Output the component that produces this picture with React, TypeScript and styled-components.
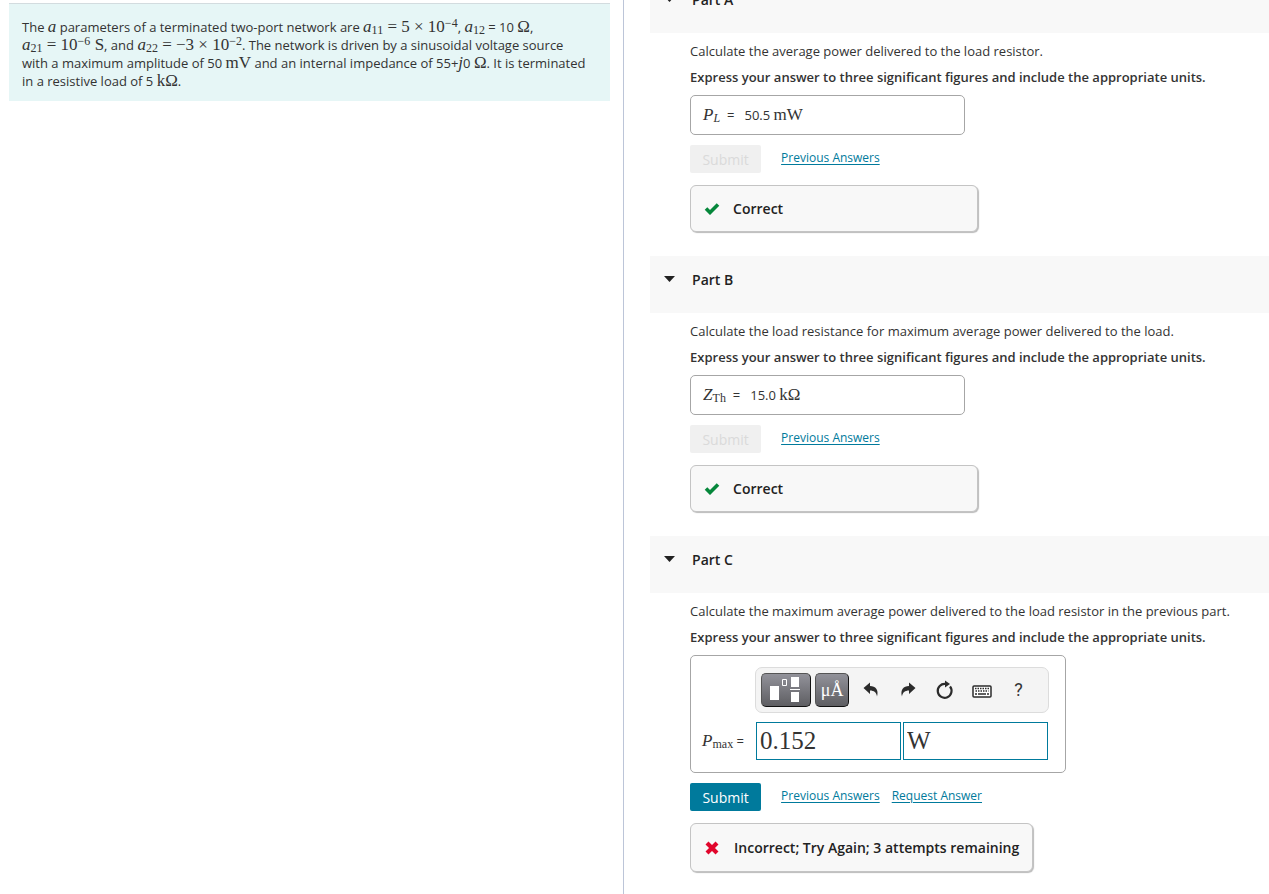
import React, { useState } from "react";
import styled, { createGlobalStyle, css } from "styled-components";

const sans = '"Open Sans", "Noto Sans CJK KR", sans-serif';
const serif = '"Liberation Serif", "Times New Roman", serif';
const teal = "#007a9c";

const GlobalStyle = createGlobalStyle`
  * { box-sizing: border-box; }
  body {
    margin: 0;
    background: #fff;
    color: #333;
    font: 13px/18px ${sans};
  }
  h2, p { margin: 0; }
  button, input { font-family: inherit; color: inherit; }
`;

const Page = styled.div`
  display: grid;
  grid-template-columns: minmax(0, 491fr) minmax(0, 509fr);
  height: 100vh;
`;

const ProblemPane = styled.section`
  padding: 3px 13px 0 9px;
`;

const ProblemText = styled.p`
  padding: 14px 13px 11px;
  border-top: 1px solid #d3dcdf;
  background: #e6f6f6;
`;

const PartsPane = styled.main`
  overflow: hidden;
  border-left: 1px solid #bcc5d8;
  padding-left: 26px;
`;

const PartList = styled.div`
  margin-top: -24px;
`;

const PartHeader = styled.button`
  display: flex;
  align-items: flex-start;
  gap: 17px;
  width: 100%;
  height: 57px;
  padding: 14px 14px;
  border: 0;
  background: #f8f8f8;
  color: #222;
  font-size: 14px;
  line-height: 20px;
  font-weight: 600;
  text-align: left;

  svg { margin-top: 6px; }
`;

const PartBody = styled.div`
  display: flex;
  flex-direction: column;
  align-items: flex-start;
  padding: 9px 16px 24px 40px;
`;

const Instruction = styled.p`
  margin: 8px 0 9px;
  font-weight: 600;
`;

const AnswerBox = styled.div`
  display: flex;
  align-items: center;
  width: 275px;
  max-width: 100%;
  height: 40px;
  padding: 0 12px;
  border: 1px solid #a6a6a6;
  border-radius: 5px;
  white-space: pre;
`;

const EntryBox = styled.div`
  display: grid;
  grid-template-columns: 53px 294px;
  row-gap: 9px;
  align-items: center;
  align-content: start;
  height: 118px;
  padding: 11px 16px 11px 11px;
  border: 1px solid #a6a6a6;
  border-radius: 5px;
`;

const Toolbar = styled.div`
  grid-column: 2;
  display: flex;
  align-items: center;
  gap: 4px;
  height: 46px;
  padding: 0 5px;
  border: 1px solid #dcdcdc;
  border-radius: 7px;
  background: #f4f4f4;
`;

const PaletteButton = styled.button<{ $wide?: boolean }>`
  display: flex;
  align-items: center;
  justify-content: center;
  width: ${(p) => (p.$wide ? 50 : 34)}px;
  height: 34px;
  padding: 0;
  border: 1px solid #111;
  border-top-color: #555;
  border-left-color: #555;
  border-radius: 5px;
  background: linear-gradient(#92929a, #5e5e62);
  color: #fff;
  font: 18px/20px ${serif};
`;

const IconGroup = styled.div`
  display: flex;
  gap: 4px;
  margin-left: 1px;
`;

const IconButton = styled.button`
  display: flex;
  align-items: center;
  justify-content: center;
  width: 33px;
  height: 34px;
  padding: 0;
  border: 0;
  background: none;
  font: 18px/20px Roboto, sans-serif;
`;

const FieldLabel = styled.label`
  white-space: pre;
`;

const Fields = styled.div`
  display: grid;
  grid-template-columns: 1fr 1fr;
  gap: 2px;
  padding: 0 1px;
`;

const Field = styled.input`
  width: 100%;
  height: 38px;
  padding: 0 3px;
  border: 1px solid ${teal};
  border-radius: 0;
  outline: 0;
  background: #fff;
  font: 25px/36px ${serif};
`;

const Actions = styled.div`
  display: flex;
  align-items: flex-start;
  gap: 12px;
  margin: 10px 0 12px;
`;

const SubmitButton = styled.button`
  width: 71px;
  height: 28px;
  margin-right: 8px;
  padding: 2px 0 0;
  border: 0;
  border-radius: 2px;
  background: ${teal};
  color: #fff;
  font-size: 14px;
  line-height: 20px;

  &:disabled {
    background: #f0f0f0;
    color: #dadada;
  }
`;

const ActionLink = styled.a`
  margin-top: 4px;
  color: ${teal};
  font-size: 12px;
  line-height: 18px;
  font-weight: 500;
  text-underline-offset: 2px;
`;

const Feedback = styled.div<{ $wide?: boolean }>`
  display: flex;
  align-items: center;
  gap: 13px;
  min-height: ${(p) => (p.$wide ? 49 : 47)}px;
  padding: 0 13px;
  border: 1px solid #c4c4c4;
  border-radius: 6px;
  background: #f8f8f8;
  box-shadow: 1px 1px 1px #bbb;
  color: #222;
  font-size: 14px;
  line-height: 20px;
  font-weight: 600;
  ${(p) =>
    !p.$wide &&
    css`
      width: 288px;
      max-width: 100%;
    `}
`;

const Math = styled.span`
  font-family: ${serif};
  font-size: 17px;
  line-height: 16px;

  sub, sup { font-size: 12px; line-height: 0; }
  sub { vertical-align: -2px; }
  sup { vertical-align: 5px; }
`;

const Caret = () => (
  <svg width="11" height="6" viewBox="0 0 11 6" aria-hidden="true">
    <path d="M0 0h11L5.500 6z" fill="#222" />
  </svg>
);

const CheckIcon = () => (
  <svg width="16" height="12" viewBox="0 0 16 12" aria-hidden="true">
    <path d="M2 5.500l4 4L14 1.500" fill="none" stroke="#06873b" strokeWidth="3.600" />
  </svg>
);

const CrossIcon = () => (
  <svg width="17" height="14" viewBox="0 0 17 14" aria-hidden="true">
    <path d="M3 2l10 10M13 2L3 12" fill="none" stroke="#e1062c" strokeWidth="4.200" />
  </svg>
);

const TemplateIcon = () => (
  <svg width="32" height="26" viewBox="0 0 32 26" fill="#fff" aria-hidden="true">
    <path d="M-1 9h10v14H-1zM21 0h8v10h-8zM21 15h8v10h-8zM20 12h10v1H20z" />
    <path d="M12.500 2.500h4v6h-4z" fill="none" stroke="#fff" />
  </svg>
);

const CurvedArrow = ({ redo }: { redo?: boolean }) => (
  <svg width="16" height="16" viewBox="0 0 16 16" aria-hidden="true">
    <path
      transform={redo ? "translate(16 0) scale(-1 1)" : undefined}
      d="M.5 6L7 .5V4c5.500 0 9 4 7 10.500C13.500 10.500 11 8.500 7 8.500V12z"
      fill="#2b2b2b"
    />
  </svg>
);

const ResetIcon = () => (
  <svg width="18" height="20" viewBox="0 0 18 20" aria-hidden="true">
    <path d="M9.500 4A6.900 6.900 0 1 0 14 6.500" fill="none" stroke="#2b2b2b" strokeWidth="2.200" />
    <path d="M9 .5l5 3.500L9 7.500z" fill="#2b2b2b" />
  </svg>
);

const KeyboardIcon = () => (
  <svg width="20" height="18" viewBox="0 0 20 18" aria-hidden="true">
    <rect x="1" y="5" width="18" height="11" rx="1" fill="#fff" stroke="#2b2b2b" strokeWidth="1.500" />
    <path
      d="M3 7.500h14M3.500 10h13"
      stroke="#2b2b2b"
      strokeWidth="1.500"
      strokeDasharray="1.500 1"
    />
    <path d="M3 13h2M6 13h8M15 13h2" stroke="#2b2b2b" strokeWidth="1.500" />
  </svg>
);

type PartProps = { name: string; question: string; children: React.ReactNode };

const Part = ({ name, question, children }: PartProps) => (
  <section>
    <h2>
      <PartHeader type="button" aria-expanded="true">
        <Caret />
        {name}
      </PartHeader>
    </h2>
    <PartBody>
      <p>{question}</p>
      <Instruction>
        Express your answer to three significant figures and include the appropriate units.
      </Instruction>
      {children}
    </PartBody>
  </section>
);

const SolvedControls = () => (
  <>
    <Actions>
      <SubmitButton type="button" disabled>Submit</SubmitButton>
      <ActionLink href="#previous">Previous Answers</ActionLink>
    </Actions>
    <Feedback>
      <CheckIcon />
      Correct
    </Feedback>
  </>
);

export default function App() {
  const [value, setValue] = useState("0.152");
  const [unit, setUnit] = useState("W");

  return (
    <>
      <GlobalStyle />
      <Page>
        <ProblemPane>
          <ProblemText>
            The <Math><i>a</i></Math> parameters of a terminated two-port network are{" "}
            <Math><i>a</i><sub>11</sub> = 5 × 10<sup>−4</sup></Math>,{" "}
            <Math><i>a</i><sub>12</sub></Math> = 10 <Math>Ω</Math>,
            <br />
            <Math><i>a</i><sub>21</sub> = 10<sup>−6</sup> S</Math>, and{" "}
            <Math><i>a</i><sub>22</sub> = −3 × 10<sup>−2</sup></Math>. The network is driven by a
            sinusoidal voltage source
            <br />
            with a maximum amplitude of 50 <Math>mV</Math> and an internal impedance of 55+
            <Math><i>j</i></Math>0 <Math>Ω</Math>. It is terminated
            <br />
            in a resistive load of 5 <Math>kΩ</Math>.
          </ProblemText>
        </ProblemPane>
        <PartsPane>
          <PartList>
            <Part
              name="Part A"
              question="Calculate the average power delivered to the load resistor."
            >
              <AnswerBox>
                <span>
                  <Math><i>P<sub>L</sub></i></Math>{"  =   50.5 "}<Math>mW</Math>
                </span>
              </AnswerBox>
              <SolvedControls />
            </Part>
            <Part
              name="Part B"
              question="Calculate the load resistance for maximum average power delivered to the load."
            >
              <AnswerBox>
                <span>
                  <Math><i>Z</i><sub>Th</sub></Math>{"  =   15.0 "}<Math>kΩ</Math>
                </span>
              </AnswerBox>
              <SolvedControls />
            </Part>
            <Part
              name="Part C"
              question="Calculate the maximum average power delivered to the load resistor in the previous part."
            >
              <EntryBox>
                <Toolbar>
                  <PaletteButton type="button" $wide aria-label="Templates">
                    <TemplateIcon />
                  </PaletteButton>
                  <PaletteButton type="button">μÅ</PaletteButton>
                  <IconGroup>
                    <IconButton type="button" aria-label="Undo"><CurvedArrow /></IconButton>
                    <IconButton type="button" aria-label="Redo"><CurvedArrow redo /></IconButton>
                    <IconButton type="button" aria-label="Reset"><ResetIcon /></IconButton>
                    <IconButton type="button" aria-label="Keyboard"><KeyboardIcon /></IconButton>
                    <IconButton type="button">?</IconButton>
                  </IconGroup>
                </Toolbar>
                <FieldLabel htmlFor="pmax">
                  <Math><i>P</i><sub>max</sub></Math>{" ="}
                </FieldLabel>
                <Fields>
                  <Field id="pmax" value={value} onChange={(e) => setValue(e.target.value)} />
                  <Field aria-label="Units" value={unit} onChange={(e) => setUnit(e.target.value)} />
                </Fields>
              </EntryBox>
              <Actions>
                <SubmitButton type="button">Submit</SubmitButton>
                <ActionLink href="#previous">Previous Answers</ActionLink>
                <ActionLink href="#request">Request Answer</ActionLink>
              </Actions>
              <Feedback $wide>
                <CrossIcon />
                Incorrect; Try Again; 3 attempts remaining
              </Feedback>
            </Part>
          </PartList>
        </PartsPane>
      </Page>
    </>
  );
}
